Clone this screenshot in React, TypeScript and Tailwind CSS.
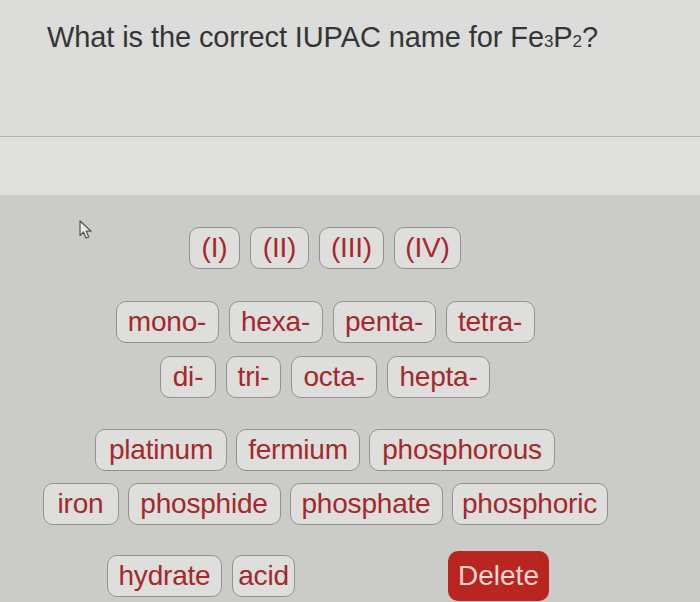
import React from "react";

const Btn = ({ label, w }: { label: string; w?: number }) => (
  <div
    className="h-[42px] flex items-center justify-center rounded-[10px] border-[1.5px] border-[#929290] bg-[#dededc] text-[#a5282b] text-[28px] leading-none shrink-0 tracking-[-0.2px]"
    style={w ? { width: w } : undefined}
  >
    {label}
  </div>
);

export default function App() {
  const font = { fontFamily: '"Liberation Sans", Arial, sans-serif' };
  return (
    <div className="w-[700px] h-[602px] overflow-hidden bg-[#cbccc8] relative" style={font}>
      <div className="h-[137px] bg-[#dcdcda] pl-[47px] pt-[16px] border-b border-[#b3b3b1]">
        <div className="text-[29px] text-[#353535] tracking-[-0.1px]">
          What is the correct IUPAC name for Fe
          <span className="text-[17px]">3</span>P<span className="text-[17px]">2</span>?
        </div>
      </div>
      <div className="h-[58px] bg-[#dfdfdc]" />
      <div className="relative pr-[50px] pt-[32px]">
        <svg
          className="absolute left-[79px] top-[25px]"
          width="16"
          height="21"
          viewBox="0 0 16 21"
        >
          <path
            d="M1 1 L1 15.5 L4.5 12 L7 18 L9.7 17 L7.2 11.2 L12.2 11.2 Z"
            fill="#ececea"
            stroke="#555"
            strokeWidth="1.2"
            strokeLinejoin="round"
          />
        </svg>
        <div className="flex justify-center gap-[10px]">
          <Btn label="(I)" w={51} />
          <Btn label="(II)" w={59} />
          <Btn label="(III)" w={65} />
          <Btn label="(IV)" w={67} />
        </div>
        <div className="flex justify-center gap-[10px] mt-[32px]">
          <Btn label="mono-" w={103} />
          <Btn label="hexa-" w={94} />
          <Btn label="penta-" w={103} />
          <Btn label="tetra-" w={89} />
        </div>
        <div className="flex justify-center gap-[10px] mt-[13px]">
          <Btn label="di-" w={56} />
          <Btn label="tri-" w={55} />
          <Btn label="octa-" w={86} />
          <Btn label="hepta-" w={103} />
        </div>
        <div className="flex justify-center gap-[9px] mt-[31px]">
          <Btn label="platinum" w={132} />
          <Btn label="fermium" w={124} />
          <Btn label="phosphorous" w={186} />
        </div>
        <div className="flex justify-center gap-[9px] mt-[12px]">
          <Btn label="iron" w={76} />
          <Btn label="phosphide" w={153} />
          <Btn label="phosphate" w={153} />
          <Btn label="phosphoric" w={156} />
        </div>
        <div className="flex justify-center items-start mt-[30px] pl-[6px]">
          <Btn label="hydrate" w={115} />
          <div className="w-[10px]" />
          <Btn label="acid" w={63} />
          <div className="w-[153px]" />
          <div className="h-[50px] w-[101px] flex items-center justify-center rounded-[10px] bg-[#b9261f] text-[#f3d6d4] text-[28px] leading-none -mt-[4px]">
            Delete
          </div>
        </div>
      </div>
    </div>
  );
}
